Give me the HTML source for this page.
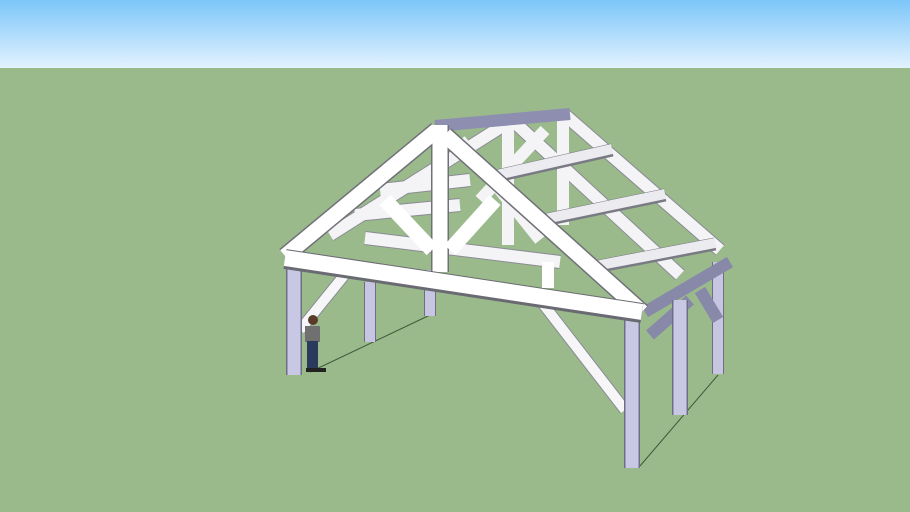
<!DOCTYPE html>
<html><head><style>
html,body{margin:0;padding:0;width:910px;height:512px;overflow:hidden}
body{background:#9aba8c;position:relative}
.sky{position:absolute;left:0;top:0;width:910px;height:68px;background:linear-gradient(#7cc6f9,#e2f2ff)}
svg{position:absolute;left:0;top:0}
</style></head><body>
<div class="sky"></div>
<svg width="910" height="512" viewBox="0 0 910 512">
<g stroke-linecap="butt">
<!-- ground lines -->
<g stroke="#3f5a3a" stroke-width="1" fill="none">
<line x1="310" y1="372" x2="430" y2="315"/>
<line x1="640" y1="466" x2="718" y2="375"/>
</g>
<!-- back structure -->
<g stroke="#6e6e80" stroke-width="12">
<line x1="370" y1="282" x2="370" y2="342"/>
<line x1="430" y1="270" x2="430" y2="316"/>
<line x1="718" y1="262" x2="718" y2="374"/>
</g>
<g stroke="#c6c6e2" stroke-width="10">
<line x1="370" y1="282" x2="370" y2="342"/>
<line x1="430" y1="270" x2="430" y2="316"/>
<line x1="718" y1="262" x2="718" y2="374"/>
</g>
<!-- back rafters & purlins -->
<g stroke="#8a8a94" stroke-width="14">
<line x1="512" y1="120" x2="330" y2="235"/>
<line x1="565" y1="115" x2="720" y2="250"/>
<line x1="512" y1="120" x2="680" y2="275"/>
<line x1="380" y1="190" x2="470" y2="180"/>
<line x1="355" y1="215" x2="460" y2="205"/>
<line x1="365" y1="238" x2="560" y2="262"/>
</g>
<g stroke="#f4f4f6" stroke-width="12">
<line x1="512" y1="120" x2="330" y2="235"/>
<line x1="565" y1="115" x2="720" y2="250"/>
<line x1="512" y1="120" x2="680" y2="275"/>
<line x1="380" y1="190" x2="470" y2="180"/>
<line x1="355" y1="215" x2="460" y2="205"/>
<line x1="365" y1="238" x2="560" y2="262"/>
<line x1="508" y1="125" x2="508" y2="245"/>
<line x1="563" y1="120" x2="563" y2="225"/>
<line x1="460" y1="140" x2="540" y2="240"/>
<line x1="545" y1="130" x2="480" y2="200"/>
</g>
<!-- ridge -->
<line x1="435" y1="126" x2="570" y2="114" stroke="#8e8eb0" stroke-width="12"/>
<!-- purlins right -->
<g stroke="#7a7a84" stroke-width="13">
<line x1="488" y1="178" x2="612" y2="150"/>
<line x1="535" y1="222" x2="665" y2="195"/>
<line x1="590" y1="268" x2="715" y2="244"/>
</g>
<g stroke="#ececf0" stroke-width="10">
<line x1="488" y1="177" x2="612" y2="149"/>
<line x1="535" y1="221" x2="665" y2="194"/>
<line x1="590" y1="267" x2="715" y2="243"/>
</g>
<!-- braces -->
<g stroke="#8a8a94" stroke-width="12">
<line x1="540" y1="300" x2="625" y2="410"/>
<line x1="355" y1="262" x2="300" y2="330"/>
</g>
<g stroke="#f6f6f8" stroke-width="10">
<line x1="540" y1="300" x2="625" y2="410"/>
<line x1="355" y1="262" x2="300" y2="330"/>
</g>
<!-- right end -->
<g stroke="#8888a8" stroke-width="12">
<line x1="645" y1="312" x2="730" y2="262"/>
<line x1="650" y1="335" x2="690" y2="300"/>
<line x1="700" y1="290" x2="718" y2="320"/>
</g>
<!-- front posts -->
<g stroke="#6e6e88" stroke-width="16">
<line x1="294" y1="262" x2="294" y2="375"/>
<line x1="632" y1="318" x2="632" y2="468"/>
<line x1="680" y1="300" x2="680" y2="415"/>
</g>
<g stroke="#c8c8e4" stroke-width="13">
<line x1="294" y1="262" x2="294" y2="375"/>
<line x1="632" y1="318" x2="632" y2="468"/>
<line x1="680" y1="300" x2="680" y2="415"/>
</g>
<!-- front rafters, king post -->
<g stroke="#707078" stroke-width="18">
<line x1="437" y1="130" x2="285" y2="256"/>
<line x1="445" y1="135" x2="642" y2="312"/>
<line x1="440" y1="125" x2="440" y2="272"/>
</g>
<g stroke="#ffffff" stroke-width="15">
<line x1="437" y1="130" x2="285" y2="256"/>
<line x1="445" y1="135" x2="642" y2="312"/>
<line x1="440" y1="125" x2="440" y2="272"/>
<line x1="385" y1="200" x2="432" y2="250"/>
<line x1="495" y1="200" x2="450" y2="250"/>
</g>
<!-- tie beam -->
<line x1="285" y1="259" x2="642" y2="313" stroke="#6a6a72" stroke-width="20"/>
<line x1="285" y1="258" x2="642" y2="312" stroke="#ffffff" stroke-width="16"/>
<line x1="548" y1="262" x2="548" y2="288" stroke="#ffffff" stroke-width="12"/>
<!-- person -->
<circle cx="313" cy="320" r="5" fill="#5a3a28"/>
<rect x="305" y="326" width="15" height="16" fill="#707070"/>
<rect x="307" y="341" width="11" height="28" fill="#2a3a5c"/>
<rect x="306" y="368" width="20" height="4" fill="#222"/>
</g>
</svg>
</body></html>
